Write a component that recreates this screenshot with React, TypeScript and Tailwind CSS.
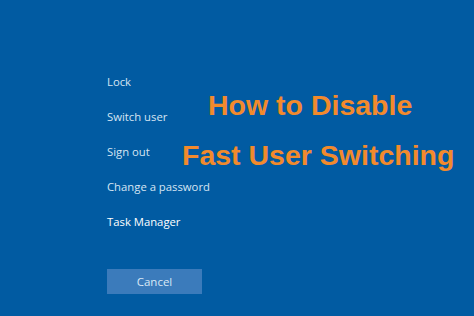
export default function App() {
  const items = ['Lock', 'Switch user', 'Sign out', 'Change a password']

  return (
    <div className="relative w-[474px] h-[316px] overflow-hidden bg-[#015ba2] font-['Open_Sans',sans-serif]">
      <div className="flex flex-col pl-[107px] pt-[64px]">
        {items.map(item => (
          <div key={item} className="h-[35px] leading-[35px] text-[11.3px] text-[#d6e5f3]">
            {item}
          </div>
        ))}
        <div className="h-[35px] leading-[35px] text-[11.3px] text-white">Task Manager</div>
        <button className="mt-[30px] w-[95px] h-[25px] bg-[#3b7bbb] text-[11.5px] text-[#d9e8f6]">
          Cancel
        </button>
      </div>

      {/* overlay caption */}
      <div className="absolute left-0 top-[80px] w-full font-['Liberation_Sans',Arial,sans-serif] font-bold text-[28.5px] leading-[50px] text-[#f28a2c]">
        <div className="pl-[208px]">How to Disable</div>
        <div className="pl-[182px]">Fast User Switching</div>
      </div>
    </div>
  )
}
